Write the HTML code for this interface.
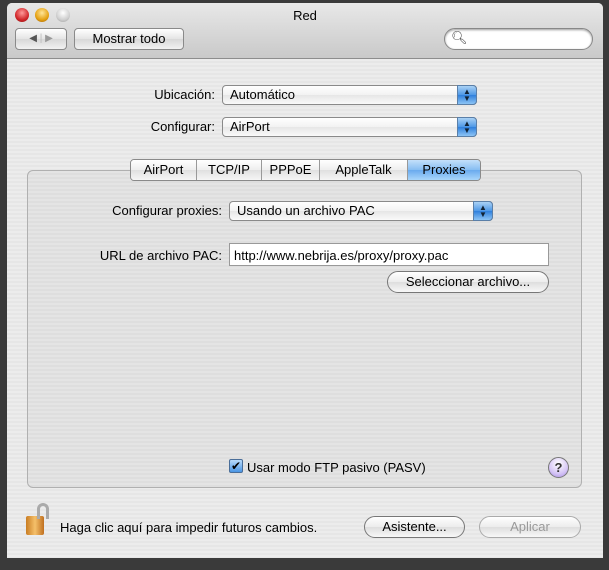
<!DOCTYPE html>
<html><head><meta charset="utf-8"><style>
*{box-sizing:border-box;margin:0;padding:0}
body{width:609px;height:570px;background:#3a3a3a;font-family:"Liberation Sans",sans-serif;font-size:13px;color:#000;position:relative;overflow:hidden}
.win{position:absolute;left:7px;top:3px;width:596px;height:555px;background:repeating-linear-gradient(#ececec 0 2px,#e6e6e6 2px 4px);border-radius:5px 5px 0 0;overflow:hidden}
.tb{position:absolute;left:0;top:0;width:100%;height:56px;background:linear-gradient(#e8e8e8,#c9c9c9);border-bottom:1px solid #8d8d8d}
.dot{position:absolute;top:5px;width:14px;height:14px;border-radius:50%}
.title{position:absolute;top:5px;left:0;width:100%;text-align:center;font-size:13px}
.btn{position:absolute;background:linear-gradient(#fff,#e4e4e4 50%,#d8d8d8 51%,#f2f2f2);border:1px solid #8a8a8a;border-radius:4px;text-align:center;font-size:13px}
.abs{position:absolute}
.lbl{position:absolute;text-align:right;font-size:13px}
.pop{position:absolute;height:20px;background:linear-gradient(#fff,#f2f2f2 50%,#e6e6e6 51%,#fafafa);border:1px solid #8a8a8a;border-radius:4px;padding:1px 0 0 7px;font-size:13px}
.pop .ar{position:absolute;right:-1px;top:-1px;width:20px;height:20px;border-radius:0 4px 4px 0;background:linear-gradient(#a9d1f5,#4d97e6 50%,#2f7fdc 51%,#8cc4f5);border:1px solid #5a7fa8;color:#123;font-size:8px;line-height:7px;text-align:center;padding-top:2px}
.rb{position:absolute;height:22px;border-radius:11px;border:1px solid #777;background:linear-gradient(#fff,#ececec 50%,#dedede 51%,#f8f8f8);text-align:center;line-height:20px;font-size:13px}
.box{position:absolute;left:20px;top:167px;width:555px;height:318px;border:1px solid #b0b0b0;border-radius:6px;background:repeating-linear-gradient(#e4e4e4 0 2px,#dedede 2px 4px)}
.tabs{position:absolute;left:123px;top:156px;height:22px;display:flex;border:1px solid #8a8a8a;border-radius:4px;overflow:hidden}
.tabs div{padding:2px 0 0;height:20px;border-right:1px solid #999;text-align:center;background:linear-gradient(#fff,#eee 50%,#e0e0e0 51%,#f6f6f6)}
.tabs div.sel{background:linear-gradient(#c4e0fa,#86bdf2 50%,#6aaaee 51%,#a9d6fb);border-right:none}
</style></head><body>
<div class="win">
 <div class="tb">
  <div class="dot" style="left:8px;background:radial-gradient(circle at 50% 35%,#ff9a9a,#d1272a 60%,#8a1010)"></div>
  <div class="dot" style="left:28px;background:radial-gradient(circle at 50% 35%,#ffe69a,#e5a112 60%,#9a5e05)"></div>
  <div class="dot" style="left:49px;background:radial-gradient(circle at 50% 35%,#fff,#cfcfcf 60%,#9a9a9a)"></div>
  <div class="title">Red</div>
  <div class="btn" style="left:8px;top:25px;width:52px;height:22px;font-size:10px;color:#555;line-height:20px">◀ <span style="color:#bbb">|</span> <span style="color:#999">▶</span></div>
  <div class="btn" style="left:67px;top:25px;width:110px;height:22px;line-height:20px">Mostrar todo</div>
  <div class="abs" style="left:437px;top:25px;width:149px;height:22px;border:1px solid #888;border-radius:11px;background:#fff;box-shadow:inset 0 1px 2px #999"><span style="position:absolute;left:6px;top:1px;font-size:13px;color:#444">&#x1F50D;&#xFE0E;</span></div>
 </div>
 <div class="lbl" style="left:100px;top:84px;width:108px">Ubicación:</div>
 <div class="pop" style="left:215px;top:82px;width:255px">Automático<div class="ar">▲<br>▼</div></div>
 <div class="lbl" style="left:100px;top:116px;width:108px">Configurar:</div>
 <div class="pop" style="left:215px;top:114px;width:255px">AirPort<div class="ar">▲<br>▼</div></div>
 <div class="box"></div>
 <div class="tabs"><div style="width:66px">AirPort</div><div style="width:65px">TCP/IP</div><div style="width:58px">PPPoE</div><div style="width:88px">AppleTalk</div><div class="sel" style="width:72px">Proxies</div></div>
 <div class="lbl" style="left:40px;top:200px;width:175px">Configurar proxies:</div>
 <div class="pop" style="left:222px;top:198px;width:264px">Usando un archivo PAC<div class="ar">▲<br>▼</div></div>
 <div class="lbl" style="left:40px;top:245px;width:175px">URL de archivo PAC:</div>
 <div class="abs" style="left:222px;top:240px;width:320px;height:23px;background:#fff;border:1px solid #999;padding:4px 4px;font-size:13px">http://www.nebrija.es/proxy/proxy.pac</div>
 <div class="rb" style="left:380px;top:268px;width:162px">Seleccionar archivo...</div>
 <div class="abs" style="left:222px;top:456px;width:14px;height:14px;border:1px solid #4a6e99;border-radius:2px;background:linear-gradient(#b9dbfa,#4a95e4);font-size:12px;line-height:12px;text-align:center;color:#000">✔</div>
 <div class="abs" style="left:240px;top:457px">Usar modo FTP pasivo (PASV)</div>
 <div class="abs" style="left:541px;top:454px;width:21px;height:21px;border-radius:50%;border:1px solid #777;background:radial-gradient(circle at 50% 30%,#fff,#d6c6f6 60%,#a98ee4);text-align:center;font-weight:bold;font-size:13px;line-height:19px;color:#333">?</div>
 <div class="abs" style="left:19px;top:513px;width:18px;height:19px;background:linear-gradient(90deg,#c97c22,#f5c06a,#c07020);border-radius:2px"></div>
 <div class="abs" style="left:30px;top:500px;width:12px;height:16px;border:3px solid #aaa;border-bottom:none;border-radius:6px 6px 0 0"></div>
 <div class="abs" style="left:53px;top:517px">Haga clic aquí para impedir futuros cambios.</div>
 <div class="rb" style="left:357px;top:513px;width:101px">Asistente...</div>
 <div class="rb" style="left:472px;top:513px;width:102px;color:#999;border-color:#aaa">Aplicar</div>
</div>
</body></html>
